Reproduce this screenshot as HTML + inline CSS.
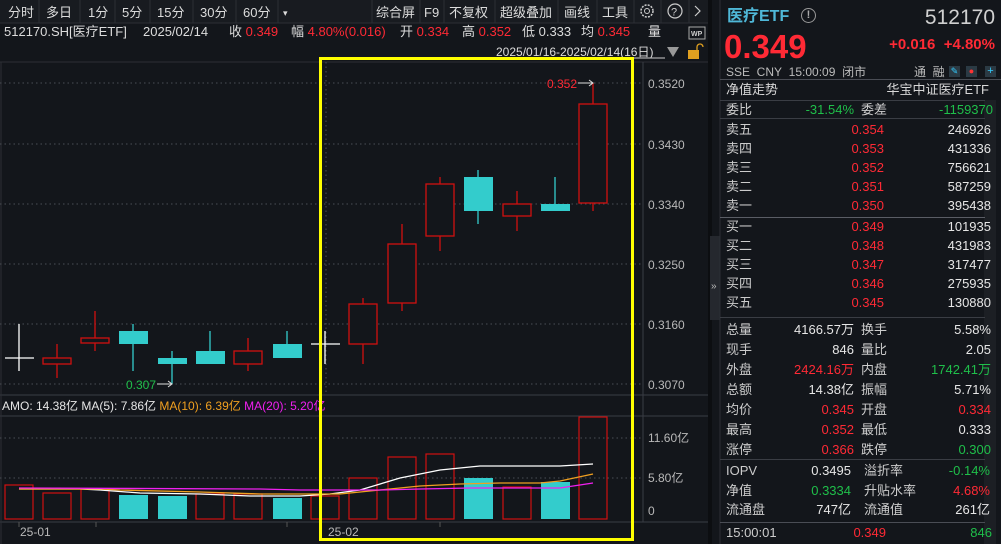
<!DOCTYPE html>
<html><head><meta charset="utf-8"><style>
*{margin:0;padding:0;box-sizing:border-box}
body{width:1001px;height:544px;background:#13161b;overflow:hidden;position:relative;font-family:"Liberation Sans","Noto Sans CJK SC",sans-serif;color:#d8d8d8}
.a{position:absolute;white-space:nowrap;line-height:16px}
.r{color:#ff2a35}.g{color:#1fbf4a}.w{color:#e6e6e6}
.rt{position:absolute;text-align:right;white-space:nowrap;line-height:16px}
.hl{position:absolute;height:1px;background:#3a3d44}
</style></head><body>
<svg width="1001" height="544" style="position:absolute;left:0;top:0" font-family="Liberation Sans,Noto Sans CJK SC,sans-serif">
<rect x="0" y="0" width="710" height="23" fill="#181b20"/>
<line x1="0" y1="23" x2="710" y2="23" stroke="#2c2f35"/>
<g stroke="#2c2f35">
<line x1="39" y1="0" x2="39" y2="23"/><line x1="80" y1="0" x2="80" y2="23"/><line x1="115" y1="0" x2="115" y2="23"/><line x1="150" y1="0" x2="150" y2="23"/><line x1="193" y1="0" x2="193" y2="23"/><line x1="236" y1="0" x2="236" y2="23"/><line x1="278" y1="0" x2="278" y2="23"/>
<line x1="372" y1="0" x2="372" y2="23"/><line x1="420" y1="0" x2="420" y2="23"/><line x1="444" y1="0" x2="444" y2="23"/><line x1="495" y1="0" x2="495" y2="23"/><line x1="558" y1="0" x2="558" y2="23"/><line x1="597" y1="0" x2="597" y2="23"/><line x1="634" y1="0" x2="634" y2="23"/><line x1="661" y1="0" x2="661" y2="23"/><line x1="689" y1="0" x2="689" y2="23"/>
</g>
<g fill="#dcdcdc" font-size="13">
<text x="8" y="17">分时</text><text x="46" y="17">多日</text><text x="88" y="17">1分</text><text x="122" y="17">5分</text><text x="157" y="17">15分</text><text x="200" y="17">30分</text><text x="243" y="17">60分</text><text x="283" y="16" font-size="9">▾</text>
<text x="376" y="17">综合屏</text><text x="424" y="17">F9</text><text x="449" y="17">不复权</text><text x="500" y="17">超级叠加</text><text x="564" y="17">画线</text><text x="602" y="17">工具</text>
</g>
<circle cx="647" cy="11" r="6" fill="none" stroke="#ccc" stroke-width="1.5" stroke-dasharray="2 1.2"/><circle cx="647" cy="11" r="2.5" fill="none" stroke="#ccc"/>
<circle cx="675" cy="11" r="7" fill="none" stroke="#ccc" stroke-width="1.2"/><text x="671" y="15.5" font-size="11" fill="#ccc">?</text>
<path d="M695 6 L700 11 L695 16" fill="none" stroke="#ccc" stroke-width="1.2"/>
<g font-size="13" fill="#dcdcdc">
<text x="4" y="36">512170.SH[医疗ETF]</text><text x="143" y="36">2025/02/14</text>
<text x="229" y="36">收 <tspan fill="#ff2a35">0.349</tspan></text>
<text x="291" y="36">幅 <tspan fill="#ff2a35">4.80%(0.016)</tspan></text>
<text x="400" y="36">开 <tspan fill="#ff2a35">0.334</tspan></text>
<text x="462" y="36">高 <tspan fill="#ff2a35">0.352</tspan></text>
<text x="522" y="36">低 0.333</text>
<text x="581" y="36">均 <tspan fill="#ff2a35">0.345</tspan></text>
<text x="648" y="36">量</text>
<text x="496" y="56" font-size="12">2025/01/16-2025/02/14(16日)</text>
</g>
<line x1="496" y1="58" x2="665" y2="58" stroke="#ccc"/>
<path d="M667 47 L679 47 L673 57Z" fill="#999"/>
<rect x="689" y="27" width="16" height="12" fill="none" stroke="#aaa"/><text x="691" y="36" font-size="7" fill="#ccc" font-weight="bold">WP</text>
<rect x="688" y="50" width="11" height="9" fill="#e0a020"/><path d="M697 50 v-3 a3 3 0 0 1 6 0" fill="none" stroke="#e0a020" stroke-width="1.3"/>
<line x1="0" y1="62" x2="710" y2="62" stroke="#2c2f35"/>
<line x1="643" y1="62" x2="643" y2="522" stroke="#3a3d44"/>
<line x1="0" y1="395" x2="710" y2="395" stroke="#3a3d44"/>
<line x1="0" y1="416" x2="710" y2="416" stroke="#3a3d44"/>
<line x1="0" y1="522" x2="710" y2="522" stroke="#3a3d44"/>
<line x1="1" y1="62" x2="1" y2="544" stroke="#2c2f35"/>
<g stroke="#4a4d55" stroke-dasharray="1.5 3">
<line x1="0" y1="83" x2="643" y2="83"/><line x1="0" y1="144" x2="643" y2="144"/><line x1="0" y1="204" x2="643" y2="204"/><line x1="0" y1="264" x2="643" y2="264"/><line x1="0" y1="324" x2="643" y2="324"/><line x1="0" y1="384" x2="643" y2="384"/>
<line x1="0" y1="438" x2="643" y2="438"/><line x1="0" y1="478" x2="643" y2="478"/>
<line x1="326" y1="62" x2="326" y2="395"/>
</g>
<g font-size="12" fill="#b8b8b8">
<text x="648" y="88">0.3520</text><text x="648" y="149">0.3430</text><text x="648" y="209">0.3340</text><text x="648" y="269">0.3250</text><text x="648" y="329">0.3160</text><text x="648" y="389">0.3070</text>
<text x="648" y="442">11.60亿</text><text x="648" y="482">5.80亿</text><text x="648" y="515">0</text>
<text x="20" y="536">25-01</text><text x="328" y="536">25-02</text>
</g>
<g stroke="#555"><line x1="96" y1="522" x2="96" y2="527"/><line x1="287" y1="522" x2="287" y2="527"/><line x1="440" y1="522" x2="440" y2="527"/><line x1="19" y1="522" x2="19" y2="527"/></g>
<g stroke-width="1.3">
<path d="M5 358 H34 M19 324 V371" stroke="#fff"/>
<path d="M57 344 V378" stroke="#d01010"/><rect x="43" y="358" width="28" height="6" fill="#13161b" stroke="#d01010"/>
<path d="M95 311 V351" stroke="#d01010"/><rect x="81" y="338" width="28" height="5" fill="#13161b" stroke="#d01010"/>
<path d="M133 324 V371" stroke="#3cc"/><rect x="119" y="331" width="29" height="13" fill="#3cc"/>
<path d="M172 351 V384" stroke="#3cc"/><rect x="158" y="358" width="29" height="6" fill="#3cc"/>
<path d="M210 331 V364" stroke="#3cc"/><rect x="196" y="351" width="29" height="13" fill="#3cc"/>
<path d="M248 338 V371" stroke="#d01010"/><rect x="234" y="351" width="28" height="13" fill="#13161b" stroke="#d01010"/>
<path d="M287 331 V344" stroke="#3cc"/><rect x="273" y="344" width="29" height="14" fill="#3cc"/>
<path d="M311 344 H340 M325 331 V364" stroke="#fff"/>
<path d="M363 298 V364" stroke="#d01010"/><rect x="349" y="304" width="28" height="40" fill="#13161b" stroke="#d01010"/>
<path d="M402 224 V311" stroke="#d01010"/><rect x="388" y="244" width="28" height="59" fill="#13161b" stroke="#d01010"/>
<path d="M440 177 V251" stroke="#d01010"/><rect x="426" y="184" width="28" height="52" fill="#13161b" stroke="#d01010"/>
<path d="M478 170 V224" stroke="#3cc"/><rect x="464" y="177" width="29" height="34" fill="#3cc"/>
<path d="M517 191 V231" stroke="#d01010"/><rect x="503" y="204" width="28" height="12" fill="#13161b" stroke="#d01010"/>
<path d="M555 177 V211" stroke="#3cc"/><rect x="541" y="204" width="29" height="7" fill="#3cc"/>
<path d="M593 83 V211" stroke="#d01010"/><rect x="579" y="104" width="28" height="99" fill="#13161b" stroke="#d01010"/>
</g>
<text x="547" y="88" font-size="12" fill="#ff2a35">0.352</text><path d="M578 83 H593 M589 80 L593 83 L589 86" stroke="#ddd" fill="none"/>
<text x="126" y="389" font-size="12" fill="#1fbf4a">0.307</text><path d="M157 384 H172 M168 381 L172 384 L168 387" stroke="#ddd" fill="none"/>
<text x="2" y="410" font-size="12" fill="#e6e6e6">AMO: 14.38亿 MA(5): 7.86亿 <tspan fill="#f0a020">MA(10): 6.39亿</tspan> <tspan fill="#f020f0">MA(20): 5.20亿</tspan></text>
<g stroke="#d01010" fill="none" stroke-width="1.2">
<rect x="5" y="485" width="28" height="34"/><rect x="43" y="493" width="28" height="26"/><rect x="81" y="489" width="28" height="30"/>
<rect x="196" y="494" width="28" height="25"/><rect x="234" y="494" width="28" height="25"/><rect x="311" y="496" width="28" height="23"/>
<rect x="349" y="478" width="28" height="41"/><rect x="388" y="457" width="28" height="62"/><rect x="426" y="454" width="28" height="65"/>
<rect x="503" y="487" width="28" height="32"/><rect x="579" y="417" width="28" height="102"/>
</g>
<g fill="#3cc">
<rect x="119" y="495" width="29" height="24"/><rect x="158" y="496" width="29" height="23"/><rect x="273" y="498" width="29" height="21"/>
<rect x="464" y="478" width="29" height="41"/><rect x="541" y="482" width="29" height="37"/>
</g>
<polyline points="19,489 80,489 100,490 140,493 200,494 250,496 300,496 330,494 360,490 400,478 440,470 480,466 540,466 560,466 593,464" fill="none" stroke="#fff" stroke-width="1.3"/>
<polyline points="19,489 100,489 120,490 200,492 260,494 300,494 340,494 380,490 420,486 460,484 500,483 540,483 560,481 593,474" fill="none" stroke="#f0a020" stroke-width="1.3"/>
<polyline points="19,488 260,489 300,490 380,490 420,489 470,488 560,488 593,483" fill="none" stroke="#f020f0" stroke-width="1.3"/>
<rect x="320.5" y="58.5" width="312" height="481" fill="none" stroke="#ffff00" stroke-width="3"/>
<rect x="708" y="0" width="4" height="544" fill="#0c0e11"/>
<rect x="710" y="236" width="10" height="84" fill="#25282e"/>
<text x="711" y="289" font-size="10" fill="#bbb">»</text>
<line x1="720" y1="0" x2="720" y2="544" stroke="#2c2f35"/>
<rect x="984" y="100" width="12" height="444" fill="#1c1f24"/>
</svg>
<div class="a" style="left:727px;top:9px;font-size:16px;font-weight:bold;color:#4fb8d8">医疗ETF</div>
<div class="a" style="left:801px;top:8px;width:15px;height:15px;border:1.5px solid #999;border-radius:50%;font-size:11px;color:#aaa;text-align:center;line-height:12px;font-weight:bold">!</div>
<div class="rt" style="right:6px;top:7px;font-size:21px;color:#d0d0d0;line-height:22px">512170</div>
<div class="a r" style="left:724px;top:29px;font-size:33px;font-weight:bold;line-height:36px">0.349</div>
<div class="rt r" style="right:6px;top:37px;font-size:15px;font-weight:bold">+0.016&nbsp;&nbsp;+4.80%</div>
<div class="a" style="left:726px;top:64px;font-size:12px;color:#bbb">SSE&nbsp;&nbsp;CNY&nbsp;&nbsp;15:00:09&nbsp;&nbsp;闭市</div>
<div class="a" style="left:914px;top:64px;font-size:12px;color:#bbb">通&nbsp;&nbsp;融</div>
<div class="a" style="left:949px;top:66px;width:11px;height:11px;background:#2b3a44;color:#3cf;font-size:9px;text-align:center;line-height:11px">✎</div>
<div class="a" style="left:966px;top:66px;width:11px;height:11px;background:#2b3a44;color:#f33;font-size:9px;text-align:center;line-height:11px">●</div>
<div class="a" style="left:985px;top:66px;width:11px;height:11px;background:#2b3a44;color:#3cf;font-size:11px;text-align:center;line-height:11px">+</div>
<div class="hl" style="left:720px;top:79px;width:281px;background:#4a4d55"></div>
<div class="a" style="left:726px;top:82px;font-size:13px">净值走势</div>
<div class="rt" style="right:12px;top:82px;font-size:13px">华宝中证医疗ETF</div>
<div class="hl" style="left:720px;top:100px;width:265px"></div>
<div class="hl" style="left:720px;top:118px;width:265px"></div>
<div class="hl" style="left:720px;top:217px;width:265px;background:#5a5d65"></div>
<div class="hl" style="left:720px;top:317px;width:265px"></div>
<div class="hl" style="left:720px;top:459px;width:265px"></div>
<div class="hl" style="left:720px;top:522px;width:265px;background:#4a4d55"></div>
<div style="position:absolute;left:0;top:0;font-size:13px;color:#ccc">
<div class="a" style="left:726px;top:102px">委比</div><div class="rt g" style="left:754px;width:100px;top:102px">-31.54%</div><div class="a" style="left:861px;top:102px">委差</div><div class="rt g" style="left:880px;width:113px;top:102px">-1159370</div>
<div class="a" style="left:726px;top:122px">卖五</div><div class="rt r" style="left:800px;width:84px;top:122px">0.354</div><div class="rt w" style="left:900px;width:91px;top:122px">246926</div>
<div class="a" style="left:726px;top:141px">卖四</div><div class="rt r" style="left:800px;width:84px;top:141px">0.353</div><div class="rt w" style="left:900px;width:91px;top:141px">431336</div>
<div class="a" style="left:726px;top:160px">卖三</div><div class="rt r" style="left:800px;width:84px;top:160px">0.352</div><div class="rt w" style="left:900px;width:91px;top:160px">756621</div>
<div class="a" style="left:726px;top:179px">卖二</div><div class="rt r" style="left:800px;width:84px;top:179px">0.351</div><div class="rt w" style="left:900px;width:91px;top:179px">587259</div>
<div class="a" style="left:726px;top:198px">卖一</div><div class="rt r" style="left:800px;width:84px;top:198px">0.350</div><div class="rt w" style="left:900px;width:91px;top:198px">395438</div>
<div class="a" style="left:726px;top:219px">买一</div><div class="rt r" style="left:800px;width:84px;top:219px">0.349</div><div class="rt w" style="left:900px;width:91px;top:219px">101935</div>
<div class="a" style="left:726px;top:238px">买二</div><div class="rt r" style="left:800px;width:84px;top:238px">0.348</div><div class="rt w" style="left:900px;width:91px;top:238px">431983</div>
<div class="a" style="left:726px;top:257px">买三</div><div class="rt r" style="left:800px;width:84px;top:257px">0.347</div><div class="rt w" style="left:900px;width:91px;top:257px">317477</div>
<div class="a" style="left:726px;top:276px">买四</div><div class="rt r" style="left:800px;width:84px;top:276px">0.346</div><div class="rt w" style="left:900px;width:91px;top:276px">275935</div>
<div class="a" style="left:726px;top:295px">买五</div><div class="rt r" style="left:800px;width:84px;top:295px">0.345</div><div class="rt w" style="left:900px;width:91px;top:295px">130880</div>

<div class="a" style="left:726px;top:322px">总量</div><div class="rt w" style="left:760px;width:94px;top:322px">4166.57万</div><div class="a" style="left:861px;top:322px">换手</div><div class="rt w" style="left:900px;width:91px;top:322px">5.58%</div>
<div class="a" style="left:726px;top:342px">现手</div><div class="rt w" style="left:760px;width:94px;top:342px">846</div><div class="a" style="left:861px;top:342px">量比</div><div class="rt w" style="left:900px;width:91px;top:342px">2.05</div>
<div class="a" style="left:726px;top:362px">外盘</div><div class="rt r" style="left:760px;width:94px;top:362px">2424.16万</div><div class="a" style="left:861px;top:362px">内盘</div><div class="rt g" style="left:900px;width:91px;top:362px">1742.41万</div>
<div class="a" style="left:726px;top:382px">总额</div><div class="rt w" style="left:760px;width:94px;top:382px">14.38亿</div><div class="a" style="left:861px;top:382px">振幅</div><div class="rt w" style="left:900px;width:91px;top:382px">5.71%</div>
<div class="a" style="left:726px;top:402px">均价</div><div class="rt r" style="left:760px;width:94px;top:402px">0.345</div><div class="a" style="left:861px;top:402px">开盘</div><div class="rt r" style="left:900px;width:91px;top:402px">0.334</div>
<div class="a" style="left:726px;top:422px">最高</div><div class="rt r" style="left:760px;width:94px;top:422px">0.352</div><div class="a" style="left:861px;top:422px">最低</div><div class="rt w" style="left:900px;width:91px;top:422px">0.333</div>
<div class="a" style="left:726px;top:442px">涨停</div><div class="rt r" style="left:760px;width:94px;top:442px">0.366</div><div class="a" style="left:861px;top:442px">跌停</div><div class="rt g" style="left:900px;width:91px;top:442px">0.300</div>

<div class="a" style="left:726px;top:463px">IOPV</div><div class="rt w" style="left:760px;width:91px;top:463px">0.3495</div><div class="a" style="left:864px;top:463px">溢折率</div><div class="rt g" style="left:900px;width:90px;top:463px">-0.14%</div>
<div class="a" style="left:726px;top:483px">净值</div><div class="rt g" style="left:760px;width:91px;top:483px">0.3334</div><div class="a" style="left:864px;top:483px">升贴水率</div><div class="rt r" style="left:900px;width:90px;top:483px">4.68%</div>
<div class="a" style="left:726px;top:502px">流通盘</div><div class="rt w" style="left:760px;width:91px;top:502px">747亿</div><div class="a" style="left:864px;top:502px">流通值</div><div class="rt w" style="left:900px;width:90px;top:502px">261亿</div>

<div class="a" style="left:726px;top:525px">15:00:01</div><div class="rt r" style="left:800px;width:86px;top:525px">0.349</div><div class="rt g" style="left:900px;width:92px;top:525px">846</div>
</div>
</body></html>
